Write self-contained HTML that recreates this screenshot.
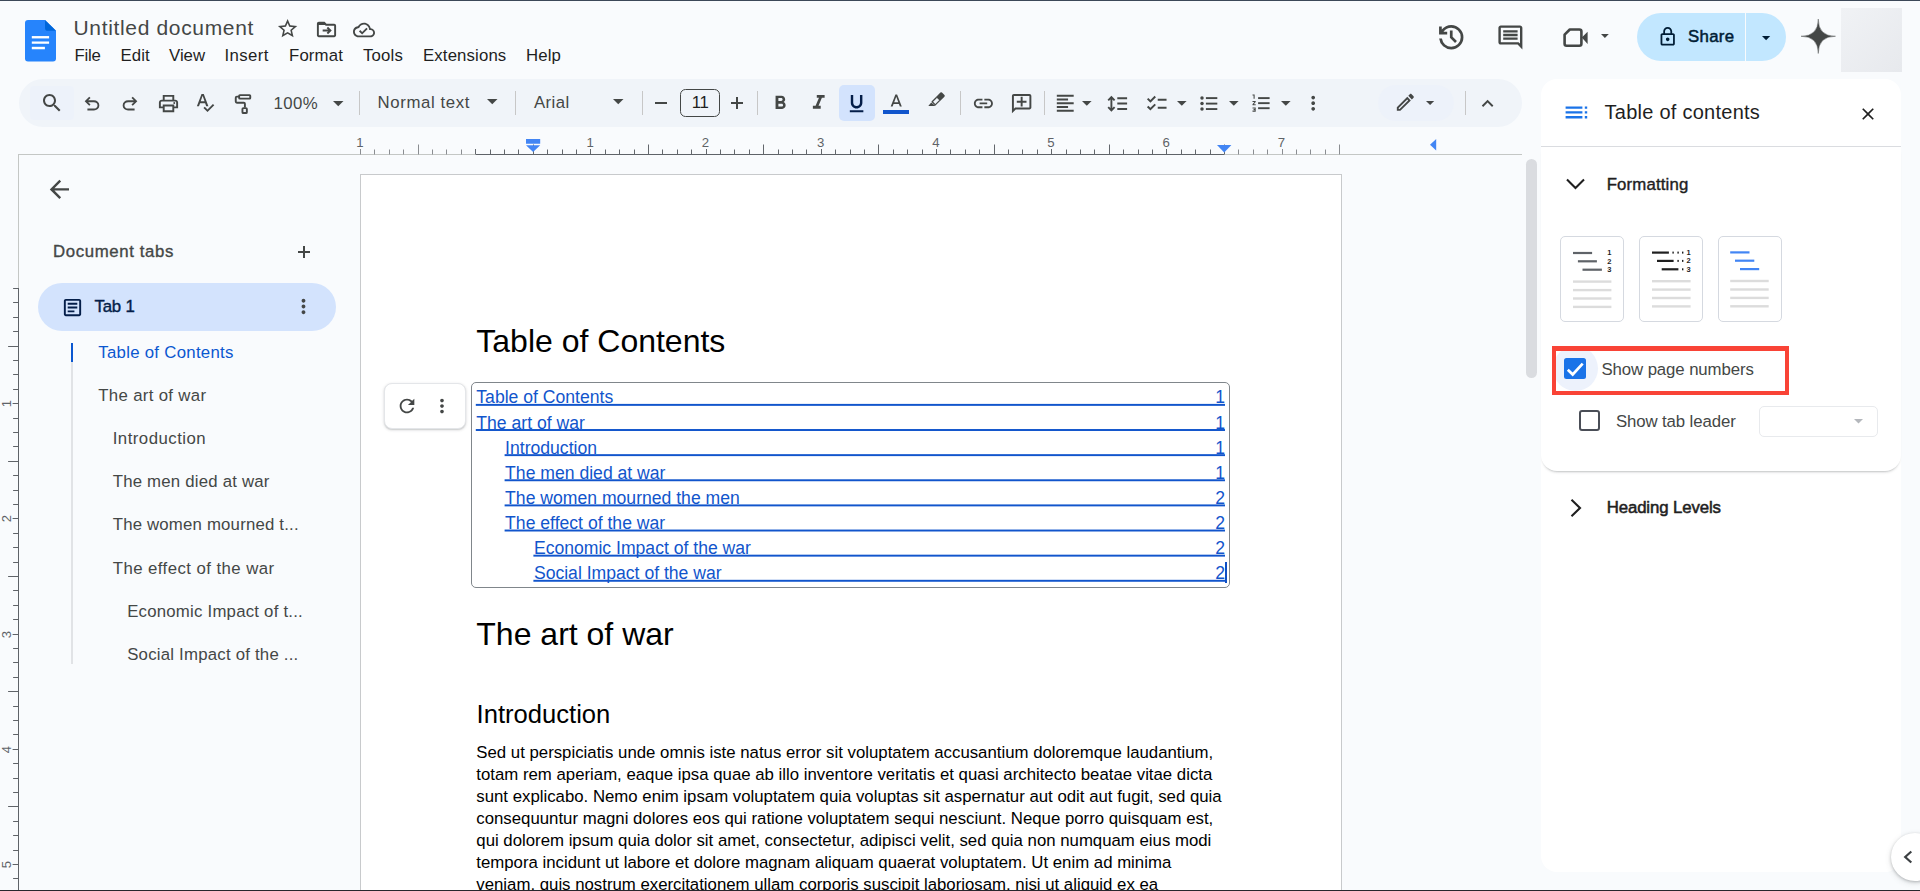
<!DOCTYPE html>
<html lang="en"><head><meta charset="utf-8"><title>Untitled document - Google Docs</title>
<style>
*{box-sizing:border-box;margin:0;padding:0}
html,body{width:1920px;height:891px;overflow:hidden;background:#f9fbfd;font-family:"Liberation Sans",Arial,sans-serif;color:#1f1f1f}
body{position:relative}
.abs{position:absolute}
svg{display:block;position:absolute;overflow:visible}
.ic{fill:#444746}
.t{position:absolute;white-space:nowrap;line-height:1}
.menu{font-size:16.8px;color:#1f1f1f;top:48px}
.tb{font-size:16.8px;color:#444746;top:96px}
.sep{position:absolute;top:91px;width:1px;height:24px;background:#c7c7c7}
.ol{font-size:16.8px;color:#444746}
.h1{font-size:32px;color:#000}
.h2{font-size:25.6px;color:#000}
.p{font-size:16.8px;color:#000}
.toc{font-size:17.6px;color:#1155cc}
.ul{position:absolute;height:2px;background:#1155cc}
</style></head><body>
<!--TOPBAR-->
<div class="abs" style="left:0;top:0;width:1920px;height:1px;background:#3c4858"></div>
<!-- docs logo -->
<svg style="left:25px;top:20px" width="31" height="41.400" viewBox="0 0 31 42" preserveAspectRatio="none"><path d="M3 0h17l11 11v28a3 3 0 0 1-3 3H3a3 3 0 0 1-3-3V3a3 3 0 0 1 3-3z" fill="#2684fc"/><path d="M20 0l11 11H23a3 3 0 0 1-3-3z" fill="#0066da"/><rect x="6.800" y="16.300" width="17.300" height="2.400" fill="#fff"/><rect x="6.800" y="21.800" width="17.300" height="2.300" fill="#fff"/><rect x="6.800" y="27.200" width="13.100" height="2.500" fill="#fff"/></svg>
<div class="t" style="left:73.5px;top:17px;font-size:21px;color:#444746;letter-spacing:.66px">Untitled document</div>
<svg class="ic" style="left:275.700px;top:16.600px" width="23.200" height="23.200" viewBox="0 0 24 24"><path d="M22 9.24l-7.19-.62L12 2 9.19 8.63 2 9.24l5.46 4.73L5.82 21 12 17.27 18.18 21l-1.63-7.03L22 9.24zM12 15.4l-3.76 2.27 1-4.28-3.32-2.88 4.38-.38L12 6.1l1.71 4.04 4.38.38-3.32 2.88 1 4.28L12 15.4z"/></svg>
<svg class="ic" style="left:314.600px;top:17.700px" width="23" height="23" viewBox="0 0 24 24"><path d="M3 5h7.300l2 2.300H3z"/><path d="M20 6h-8l-2-2H4c-1.1 0-2 .9-2 2v12c0 1.1.9 2 2 2h16c1.1 0 2-.9 2-2V8c0-1.1-.9-2-2-2zm0 12H4V6h5.17l2 2H20v10zm-7.84-2.59L13.58 16.83l3.92-3.83-3.92-3.83-1.42 1.41L13.6 12H8v2h5.6z"/></svg>
<svg class="ic" style="left:353px;top:18.5px" width="22" height="22" viewBox="0 0 24 24"><path d="M19.35 10.04C18.67 6.59 15.64 4 12 4 9.11 4 6.6 5.64 5.35 8.04 2.34 8.36 0 10.91 0 14c0 3.31 2.69 6 6 6h13c2.76 0 5-2.24 5-5 0-2.64-2.05-4.78-4.65-4.96zM19 18H6c-2.21 0-4-1.79-4-4 0-2.05 1.53-3.76 3.56-3.97l1.07-.11.5-.95C8.08 7.14 9.94 6 12 6c2.62 0 4.88 1.86 5.39 4.43l.3 1.5 1.53.11c1.56.1 2.78 1.41 2.78 2.96 0 1.65-1.35 3-3 3zm-9-3.82l-2.09-2.09L6.5 13.5 10 17l6.01-6.01-1.41-1.41z"/></svg>
<div class="t menu" style="left:74.5px;letter-spacing:-.2px">File</div>
<div class="t menu" style="left:120.5px;letter-spacing:.1px">Edit</div>
<div class="t menu" style="left:169px">View</div>
<div class="t menu" style="left:224.5px;letter-spacing:.39px">Insert</div>
<div class="t menu" style="left:289px;letter-spacing:.14px">Format</div>
<div class="t menu" style="left:363px;letter-spacing:.16px">Tools</div>
<div class="t menu" style="left:423px;letter-spacing:.13px">Extensions</div>
<div class="t menu" style="left:526px;letter-spacing:.12px">Help</div>
<!-- right header -->
<svg class="ic" style="left:1434.750px;top:20.750px" width="32.500" height="32.500" viewBox="0 -960 960 960"><path d="M480-120q-138 0-240.500-91.500T122-440h82q14 104 92.500 172T480-200q117 0 198.500-81.500T760-480q0-117-81.500-198.500T480-760q-69 0-129 32t-101 88h110v80H120v-240h80v94q51-64 124.500-99T480-840q75 0 140.500 28.500t114 77q48.500 48.500 77 114T840-480q0 75-28.500 140.500t-77 114q-48.500 48.500-114 77T480-120Zm112-192L440-464v-216h80v184l128 128-56 56Z"/></svg>
<svg class="ic" style="left:1495.850px;top:23.300px" width="28.800" height="28.800" viewBox="0 0 24 24"><path d="M21.99 4c0-1.1-.89-2-1.99-2H4c-1.1 0-2 .9-2 2v12c0 1.1.9 2 2 2h14l4 4-.01-18zM20 4v13.17L18.83 16H4V4h16zM6 12h12v2H6zm0-3h12v2H6zm0-3h12v2H6z"/></svg>
<svg style="left:1561px;top:24px" width="30" height="28" viewBox="0 0 30 28"><path d="M8.800 5.500H18.400a2 2 0 0 1 2 2V19.800a2 2 0 0 1-2 2H5.600a2 2 0 0 1-2-2V10.700z" fill="none" stroke="#444746" stroke-width="2.600" stroke-linejoin="round"/><path d="M20.800 13.400l5.800-5.600v12.200z" fill="#444746"/></svg>
<svg class="ic" style="left:1601.100px;top:33.900px" width="7.800" height="4" viewBox="0 0 10 5"><path d="M0 0h10L5 5z"/></svg>
<div class="abs" style="left:1637px;top:13px;width:149px;height:48px;border-radius:24px;background:#c2e7ff"></div>
<div class="abs" style="left:1745px;top:13px;width:1.3px;height:48px;background:#f9fbfd"></div>
<svg style="left:1656.750px;top:26px" width="21.400" height="21.400" viewBox="0 0 24 24" fill="#001d35"><path d="M18 8h-1V6c0-2.76-2.24-5-5-5S7 3.240 7 6v2H6c-1.1 0-2 .9-2 2v10c0 1.1.9 2 2 2h12c1.100 0 2-.9 2-2V10c0-1.1-.9-2-2-2zM9 6c0-1.66 1.34-3 3-3s3 1.34 3 3v2H9V6zm9 14H6V10h12v10zm-6-3c1.1 0 2-.9 2-2s-.9-2-2-2-2 .9-2 2 .9 2 2 2z"/></svg>
<div class="t" style="left:1688px;top:29px;font-size:16.800px;color:#001d35;letter-spacing:.3px;-webkit-text-stroke:.5px #001d35">Share</div>
<svg style="left:1762.200px;top:35.900px" width="8.200" height="4.300" viewBox="0 0 10 5" fill="#001d35"><path d="M0 0h10L5 5z"/></svg>
<svg style="left:1801.200px;top:19.150px" width="34.500" height="34.500" viewBox="0 0 24 24" fill="#444746" stroke="#444746" stroke-width=".3" stroke-linejoin="miter" stroke-miterlimit="20"><path d="M12 0Q12 12 24 12Q12 12 12 24Q12 12 0 12Q12 12 12 0z"/></svg>
<div class="abs" style="left:1841px;top:8px;width:61px;height:64px;background:linear-gradient(135deg,#f0f2f5,#e7e9ed)"></div>
<!--TOOLBAR-->
<div class="abs" style="left:19px;top:79px;width:1503px;height:48px;border-radius:24px;background:#f0f4f9"></div>
<div class="abs" style="left:30px;top:86px;width:44px;height:34px;border-radius:4px;background:#edf2fa"></div>
<div class="abs" style="left:1378px;top:85px;width:76px;height:36px;border-radius:18px;background:#edf2fa"></div>
<svg style="left:39.7px;top:91.2px" width="24" height="24" viewBox="0 0 24 24" fill="#444746" ><path d="M15.5 14h-.79l-.28-.27C15.41 12.59 16 11.11 16 9.5 16 5.91 13.09 3 9.5 3S3 5.91 3 9.5 5.91 16 9.5 16c1.61 0 3.09-.59 4.23-1.57l.27.28v.79l5 4.99L20.49 19l-4.99-5zm-6 0C7.01 14 5 11.99 5 9.5S7.01 5 9.5 5 14 7.01 14 9.5 11.99 14 9.500 14z"/></svg>
<svg style="left:81.3px;top:93.3px" width="22" height="22" viewBox="0 -960 960 960" fill="#444746" ><path d="M280-200v-80h284q63 0 109.500-40T720-420q0-60-46.500-100T564-560H312l104 104-56 56-200-200 200-200 56 56-104 104h252q97 0 166.500 63T800-420q0 94-69.500 157T564-200H280Z"/></svg>
<svg style="left:118.5px;top:93.3px" width="22" height="22" viewBox="0 -960 960 960" fill="#444746" ><path d="M396-200q-97 0-166.500-63T160-420q0-94 69.500-157T396-640h252L544-744l56-56 200 200-200 200-56-56 104-104H396q-63 0-109.500 40T240-420q0 60 46.500 100T396-280h284v80H396Z"/></svg>
<svg style="left:157.1px;top:92.1px" width="23" height="23" viewBox="0 -960 960 960" fill="#444746" ><path d="M640-640v-120H320v120h-80v-200h480v200h-80Zm80 180q17 0 28.500-11.500T760-500q0-17-11.500-28.500T720-540q-17 0-28.500 11.500T680-500q0 17 11.500 28.500T720-460Zm-80 260v-160H320v160h320Zm80 80H240v-160H80v-240q0-51 35-85.500t85-34.500h560q51 0 85.500 34.500T880-520v240H720v160Zm80-240v-160q0-17-11.500-28.500T760-560H200q-17 0-28.500 11.500T160-520v160h80v-80h480v80h80Z"/></svg>
<svg style="left:194.1px;top:90.6px" width="23" height="23" viewBox="0 -960 960 960" fill="#444746" ><path d="M564-80 394-250l56-56 114 114 226-226 56 56L564-80ZM120-320l194-520h94l194 520h-92l-46-132H254l-46 132h-88Zm160-208h160l-78-222h-4l-78 222Z"/></svg>
<svg style="left:231.0px;top:92.0px" width="24" height="24" viewBox="0 0 24 24" fill="#444746" ><g fill="none" stroke="#444746" stroke-width="1.900" stroke-linejoin="round"><rect x="8.150" y="3.150" width="11.100" height="3.500" rx=".7"/><path d="M8.150 4.600H5.900Q4.750 4.600 4.750 5.700V9.600Q4.750 10.700 5.900 10.700H12.800Q13.900 10.700 13.900 11.800V15.400"/><rect x="11.450" y="16.150" width="4.400" height="4.900" rx=".9"/></g></svg>
<div class="t tb" style="left:273.500px;letter-spacing:.4px">100%</div>
<svg style="left:333.4px;top:101.2px" width="10.5" height="5.25" viewBox="0 0 10 5" fill="#444746"><path d="M0 0h10L5 5z"/></svg>
<div class="sep" style="left:359px"></div>
<div class="t tb" style="left:377.500px;top:95px;letter-spacing:.62px">Normal text</div>
<svg style="left:487.4px;top:99.4px" width="10.5" height="5.25" viewBox="0 0 10 5" fill="#444746"><path d="M0 0h10L5 5z"/></svg>
<div class="sep" style="left:515px"></div>
<div class="t tb" style="left:534px;top:95px;letter-spacing:.4px">Arial</div>
<svg style="left:613.4px;top:99.4px" width="10.5" height="5.25" viewBox="0 0 10 5" fill="#444746"><path d="M0 0h10L5 5z"/></svg>
<div class="sep" style="left:642px"></div>
<div class="abs" style="left:654.800px;top:102px;width:12px;height:2px;background:#444746"></div>
<div class="abs" style="left:680px;top:88.800px;width:40px;height:28.200px;border:1.200px solid #444746;border-radius:5.500px"></div>
<div class="t tb" style="left:691.800px;top:95px;letter-spacing:-.5px;color:#1f1f1f">11</div>
<div class="abs" style="left:731.300px;top:102px;width:12px;height:2px;background:#444746"></div><div class="abs" style="left:736.300px;top:97px;width:2px;height:12px;background:#444746"></div>
<div class="sep" style="left:757px"></div>
<svg style="left:769.4px;top:92.0px" width="22.5" height="22.5" viewBox="0 0 24 24" fill="#444746" ><path d="M15.600 10.790c.97-.67 1.650-1.770 1.650-2.790 0-2.260-1.750-4-4-4H7v14h7.040c2.090 0 3.710-1.700 3.710-3.790 0-1.520-.86-2.820-2.150-3.420zM10 6.500h3c.83 0 1.500.67 1.500 1.500s-.67 1.500-1.500 1.500h-3v-3zm3.500 9H10v-3h3.500c.83 0 1.500.67 1.500 1.500s-.67 1.500-1.500 1.500z"/></svg>
<svg style="left:807.4px;top:91.3px" width="23.5" height="23.5" viewBox="0 0 24 24" fill="#444746" ><path d="M10 4v3h2.210l-3.420 8H6v3h8v-3h-2.210l3.420-8H18V4z"/></svg>
<div class="abs" style="left:839px;top:85px;width:36px;height:36px;border-radius:5px;background:#d3e3fd"></div>
<svg style="left:845.4px;top:91.9px" width="23.2" height="23.2" viewBox="0 0 24 24" fill="#041e49" ><path d="M12 17c3.310 0 6-2.690 6-6V3h-2.500v8c0 1.930-1.570 3.500-3.500 3.500S8.500 12.930 8.500 11V3H6v8c0 3.310 2.690 6 6 6zm-7 2v2h14v-2H5z"/></svg>
<svg style="left:885.6px;top:92.1px" width="20.5" height="20.5" viewBox="0 0 24 24" fill="#444746" ><path d="M11 3L5.500 17h2.250l1.120-3h6.250l1.120 3h2.250L13 3h-2zm-1.380 9L12 5.670 14.380 12H9.620z"/></svg>
<div class="abs" style="left:883px;top:110px;width:26px;height:4px;background:#1155cc"></div>
<svg style="left:0;top:0" width="1920" height="130"><g transform="translate(938.250 98.800) rotate(45)"><path d="M-2.850 0.300V-5.900a1.100 1.100 0 0 1 1.100-1.100H1.750a1.100 1.100 0 0 1 1.100 1.100V0.300z" fill="#444746"/><path d="M-2.200 0V6.400H2.200V0" fill="none" stroke="#444746" stroke-width="1.300" stroke-linejoin="round"/></g><path d="M931.200 102.600L928.300 105.950H935.600z" fill="#444746"/></svg>
<div class="sep" style="left:960px"></div>
<svg style="left:971.9px;top:92.3px" width="22.8" height="22.8" viewBox="0 0 24 24" fill="#444746" ><path d="M3.900 12c0-1.710 1.390-3.100 3.100-3.100h4V7H7c-2.760 0-5 2.240-5 5s2.240 5 5 5h4v-1.900H7c-1.710 0-3.100-1.390-3.100-3.100zM8 13h8v-2H8v2zm9-6h-4v1.900h4c1.710 0 3.100 1.390 3.100 3.100s-1.390 3.100-3.100 3.100h-4V17h4c2.760 0 5-2.240 5-5s-2.240-5-5-5z"/></svg>
<svg style="left:1010.1px;top:91.5px" width="23.3" height="23.3" viewBox="0 0 24 24" fill="#444746" ><g transform="translate(24 0) scale(-1 1)"><path d="M22 4c0-1.100-.9-2-2-2H4c-1.100 0-2 .9-2 2v12c0 1.100.9 2 2 2h14l4 4V4zm-2 13.170L18.830 16H4V4h16v13.170zM13 5h-2v4H7v2h4v4h2v-4h4V9h-4z"/></g></svg>
<div class="sep" style="left:1044px"></div>
<svg style="left:1054.3px;top:92.2px" width="22.5" height="22.5" viewBox="0 0 24 24" fill="#444746" ><path d="M15 15H3v2h12v-2zm0-8H3v2h12V7zM3 13h18v-2H3v2zm0 8h18v-2H3v2zM3 3v2h18V3H3z"/></svg>
<svg style="left:1081.8px;top:101.1px" width="9.6" height="4.8" viewBox="0 0 10 5" fill="#444746"><path d="M0 0h10L5 5z"/></svg>
<svg style="left:1107px;top:95px" width="22" height="18" viewBox="0 0 22 18" fill="none" stroke="#444746"><path d="M10.300 3.300H20.100M10.300 8.600H20.100M10.300 13.900H20.100" stroke-width="2"/><path d="M4.400 2.500V15M1.200 5.400L4.400 2.200L7.600 5.400M1.200 12.100L4.400 15.300L7.600 12.100" stroke-width="1.900"/></svg>
<svg style="left:1145.2px;top:91.7px" width="23.5" height="23.5" viewBox="0 0 24 24" fill="#444746" ><path d="M22 7h-9v2h9V7zm0 8h-9v2h9v-2zM5.540 11L2 7.460l1.410-1.410 2.120 2.120 4.240-4.240 1.410 1.410L5.540 11zm0 8L2 15.460l1.410-1.410 2.120 2.120 4.240-4.240 1.410 1.410L5.540 19z"/></svg>
<svg style="left:1176.7px;top:101.1px" width="9.6" height="4.8" viewBox="0 0 10 5" fill="#444746"><path d="M0 0h10L5 5z"/></svg>
<svg class="ic" style="left:0;top:0" width="1920" height="130"><circle cx="1202" cy="98.100" r="1.750"/><circle cx="1202" cy="103.600" r="1.750"/><circle cx="1202" cy="109.050" r="1.750"/><rect x="1205.900" y="97.150" width="11.400" height="1.900"/><rect x="1205.900" y="102.650" width="11.400" height="1.900"/><rect x="1205.900" y="108.100" width="11.400" height="1.900"/></svg>
<svg style="left:1228.6px;top:101.1px" width="9.6" height="4.8" viewBox="0 0 10 5" fill="#444746"><path d="M0 0h10L5 5z"/></svg>
<svg class="ic" style="left:0;top:0" width="1920" height="130"><g transform="translate(1250.360 90.260) scale(1.070)"><path d="M2 17h2v.5H3v1h1v.5H2v1h3v-4H2v1zm1-9h1V4H2v1h1v3zm-1 3h1.800L2 13.100v.9h3v-1H3.200L5 10.900V10H2v1z"/></g><rect x="1258.100" y="97.150" width="11.500" height="1.900"/><rect x="1258.100" y="102.200" width="11.500" height="1.900"/><rect x="1258.100" y="107.250" width="11.500" height="1.900"/></svg>
<svg style="left:1280.7px;top:101.1px" width="9.6" height="4.8" viewBox="0 0 10 5" fill="#444746"><path d="M0 0h10L5 5z"/></svg>
<svg style="left:1301.9px;top:92.2px" width="22.4" height="22.4" viewBox="0 0 24 24" fill="#444746" ><path d="M12 8c1.100 0 2-.9 2-2s-.9-2-2-2-2 .9-2 2 .9 2 2 2zm0 2c-1.100 0-2 .9-2 2s.9 2 2 2 2-.9 2-2-.9-2-2-2zm0 6c-1.100 0-2 .9-2 2s.9 2 2 2 2-.9 2-2-.9-2-2-2z"/></svg>
<svg style="left:1394.0px;top:91.1px" width="22.7" height="22.7" viewBox="0 0 24 24" fill="#444746" ><path d="M14.060 9.020l.92.92L5.920 19H5v-.92l9.060-9.060M17.660 3c-.25 0-.51.1-.7.290l-1.830 1.830 3.750 3.750 1.830-1.830c.39-.39.39-1.020 0-1.410l-2.340-2.340c-.2-.2-.45-.29-.71-.29zm-3.600 3.190L3 17.250V21h3.750L17.810 9.940l-3.750-3.750z"/></svg>
<svg style="left:1425.9px;top:100.9px" width="8.2" height="4.1" viewBox="0 0 10 5" fill="#444746"><path d="M0 0h10L5 5z"/></svg>
<div class="sep" style="left:1465px"></div>
<svg style="left:1476.2px;top:92.2px" width="23.2" height="23.2" viewBox="0 0 24 24" fill="#444746" ><path d="M12 8l-6 6 1.410 1.410L12 10.830l4.590 4.580L18 14z"/></svg>
<!--RULERS-->
<div class="abs" style="left:18px;top:154px;width:1504px;height:1px;background:#c4c7c5"></div>
<div class="abs" style="left:475.600px;top:154px;width:748.800px;height:1px;background:#5f6368"></div>
<svg style="left:0;top:0" width="1920" height="160"><path d="M360.5 149V154.500M374.5 149.5V154.500M389.5 149.5V154.500M403.5 149.5V154.500M418.5 144.5V154.500M432.5 149.5V154.500M446.5 149.5V154.500M461.5 149.5V154.500M1238.5 149.5V154.500M1253.5 149.5V154.500M1267.5 149.5V154.500M1282.5 149V154.500M1296.5 149.5V154.500M1310.5 149.5V154.500M1325.5 149.5V154.500M1339.5 144.5V154.500" stroke="#8a8d91" stroke-width="1" fill="none"/><path d="M475.5 149V154.500M490.5 149.5V154.500M504.5 149.5V154.500M518.5 149.5V154.500M533.5 144.5V154.500M547.5 149.5V154.500M562.5 149.5V154.500M576.5 149.5V154.500M590.5 149V154.500M605.5 149.5V154.500M619.5 149.5V154.500M634.5 149.5V154.500M648.5 144.5V154.500M662.5 149.5V154.500M677.5 149.5V154.500M691.5 149.5V154.500M706.5 149V154.500M720.5 149.5V154.500M734.5 149.5V154.500M749.5 149.5V154.500M763.5 144.5V154.500M778.5 149.5V154.500M792.5 149.5V154.500M806.5 149.5V154.500M821.5 149V154.500M835.5 149.5V154.500M850.5 149.5V154.500M864.5 149.5V154.500M878.5 144.5V154.500M893.5 149.5V154.500M907.5 149.5V154.500M922.5 149.5V154.500M936.5 149V154.500M950.5 149.5V154.500M965.5 149.5V154.500M979.5 149.5V154.500M994.5 144.5V154.500M1008.5 149.5V154.500M1022.5 149.5V154.500M1037.5 149.5V154.500M1051.5 149V154.500M1066.5 149.5V154.500M1080.5 149.5V154.500M1094.5 149.5V154.500M1109.5 144.5V154.500M1123.5 149.5V154.500M1138.5 149.5V154.500M1152.5 149.5V154.500M1166.5 149V154.500M1181.5 149.5V154.500M1195.5 149.5V154.500M1210.5 149.5V154.500M1224.5 144.5V154.500" stroke="#63676c" stroke-width="1" fill="none"/></svg>
<div class="t" style="left:349.8px;top:136px;width:20px;text-align:center;font-size:13.200px;color:#5f6368">1</div>
<div class="t" style="left:580.2px;top:136px;width:20px;text-align:center;font-size:13.200px;color:#5f6368">1</div>
<div class="t" style="left:695.4px;top:136px;width:20px;text-align:center;font-size:13.200px;color:#5f6368">2</div>
<div class="t" style="left:810.6px;top:136px;width:20px;text-align:center;font-size:13.200px;color:#5f6368">3</div>
<div class="t" style="left:925.8px;top:136px;width:20px;text-align:center;font-size:13.200px;color:#5f6368">4</div>
<div class="t" style="left:1041.0px;top:136px;width:20px;text-align:center;font-size:13.200px;color:#5f6368">5</div>
<div class="t" style="left:1156.2px;top:136px;width:20px;text-align:center;font-size:13.200px;color:#5f6368">6</div>
<div class="t" style="left:1271.4px;top:136px;width:20px;text-align:center;font-size:13.200px;color:#5f6368">7</div>
<svg style="left:526px;top:139px" width="14.400" height="14" viewBox="0 0 14.400 14" fill="#4285f4"><rect x="0" y="0" width="14.200" height="4.750"/><path d="M0 6.200h14.200L7.100 13z"/></svg>
<svg style="left:1217px;top:145px" width="14.400" height="8" viewBox="0 0 14.400 8" fill="#4285f4"><path d="M0 0h14.400L7.200 7.500z"/></svg>
<svg style="left:1429.900px;top:139.300px" width="6.200" height="11.400" viewBox="0 0 6.200 11.400" fill="#4285f4"><path d="M6.200 0v11.400L0 5.700z"/></svg>
<div class="abs" style="left:18px;top:154px;width:1px;height:737px;background:#c4c7c5"></div>
<div class="abs" style="left:18px;top:288px;width:1.200px;height:603px;background:#5f6368"></div>
<svg style="left:0;top:0" width="20" height="891"><path d="M13.1 288.5H18.500M13.1 302.5H18.500M13.1 317.5H18.500M13.1 331.5H18.500M8.1 346.5H18.500M13.1 360.5H18.500M13.1 374.5H18.500M13.1 389.5H18.500M12.6 403.5H18.500M13.1 418.5H18.500M13.1 432.5H18.500M13.1 446.5H18.500M8.1 461.5H18.500M13.1 475.5H18.500M13.1 490.5H18.500M13.1 504.5H18.500M12.6 518.5H18.500M13.1 533.5H18.500M13.1 547.5H18.500M13.1 562.5H18.500M8.1 576.5H18.500M13.1 590.5H18.500M13.1 605.5H18.500M13.1 619.5H18.500M12.6 634.5H18.500M13.1 648.5H18.500M13.1 662.5H18.500M13.1 677.5H18.500M8.1 691.5H18.500M13.1 706.5H18.500M13.1 720.5H18.500M13.1 734.5H18.500M12.6 749.5H18.500M13.1 763.5H18.500M13.1 778.5H18.500M13.1 792.5H18.500M8.1 806.5H18.500M13.1 821.5H18.500M13.1 835.5H18.500M13.1 850.5H18.500M12.6 864.5H18.500M13.1 878.5H18.500" stroke="#5f6368" stroke-width="1" fill="none"/></svg>
<div class="t" style="left:-3.700px;top:397.2px;width:20px;height:13px;text-align:center;font-size:13px;color:#5f6368;transform:rotate(-90deg)">1</div>
<div class="t" style="left:-3.700px;top:512.4px;width:20px;height:13px;text-align:center;font-size:13px;color:#5f6368;transform:rotate(-90deg)">2</div>
<div class="t" style="left:-3.700px;top:627.6px;width:20px;height:13px;text-align:center;font-size:13px;color:#5f6368;transform:rotate(-90deg)">3</div>
<div class="t" style="left:-3.700px;top:742.8px;width:20px;height:13px;text-align:center;font-size:13px;color:#5f6368;transform:rotate(-90deg)">4</div>
<div class="t" style="left:-3.700px;top:858.0px;width:20px;height:13px;text-align:center;font-size:13px;color:#5f6368;transform:rotate(-90deg)">5</div>
<!--SIDEBAR-->
<svg class="ic" style="left:44.500px;top:174.700px" width="28.800" height="28.800" viewBox="0 0 24 24"><path d="M20 11H7.830l5.590-5.590L12 4l-8 8 8 8 1.410-1.410L7.830 13H20v-2z"/></svg>
<div class="t " style="left:53.0px;top:244px;font-size:16.8px;color:#444746;letter-spacing:.62px;-webkit-text-stroke:.35px #444746">Document tabs</div>
<div class="abs" style="left:297.500px;top:251.200px;width:12.500px;height:1.900px;background:#444746"></div><div class="abs" style="left:302.800px;top:245.900px;width:1.900px;height:12.500px;background:#444746"></div>
<div class="abs" style="left:38px;top:283px;width:298px;height:48px;border-radius:24px;background:#d3e3fd"></div>
<svg style="left:60.800px;top:295.500px" width="23" height="23" viewBox="0 0 24 24" fill="#041e49"><path d="M19 5v14H5V5h14m0-2H5c-1.100 0-2 .9-2 2v14c0 1.100.9 2 2 2h14c1.100 0 2-.9 2-2V5c0-1.100-.9-2-2-2zm-5 14H7v-2h7v2zm3-4H7v-2h10v2zm0-4H7V7h10v2z"/></svg>
<div class="t " style="left:94.5px;top:299px;font-size:16.8px;color:#041e49;letter-spacing:-.2px;-webkit-text-stroke:.4px #041e49">Tab 1</div>
<svg class="ic" style="left:292.400px;top:295.300px" width="23" height="23" viewBox="0 0 24 24"><path d="M12 8c1.100 0 2-.9 2-2s-.9-2-2-2-2 .9-2 2 .9 2 2 2zm0 2c-1.100 0-2 .9-2 2s.9 2 2 2 2-.9 2-2-.9-2-2-2zm0 6c-1.100 0-2 .9-2 2s.9 2 2 2 2-.9 2-2-.9-2-2-2z"/></svg>
<div class="abs" style="left:71px;top:343px;width:2px;height:321px;background:#e1e3e6"></div>
<div class="abs" style="left:71px;top:343px;width:2px;height:19px;background:#0b57d0"></div>
<div class="t " style="left:98.3px;top:345px;font-size:16.8px;letter-spacing:0.28px;color:#0b57d0">Table of Contents</div>
<div class="t " style="left:98.3px;top:388px;font-size:16.8px;letter-spacing:0.32px;color:#444746">The art of war</div>
<div class="t " style="left:112.7px;top:431px;font-size:16.8px;letter-spacing:0.48px;color:#444746">Introduction</div>
<div class="t " style="left:112.7px;top:474px;font-size:16.8px;letter-spacing:0.21px;color:#444746">The men died at war</div>
<div class="t " style="left:112.7px;top:517px;font-size:16.8px;letter-spacing:0.19px;color:#444746">The women mourned t...</div>
<div class="t " style="left:112.7px;top:561px;font-size:16.8px;letter-spacing:0.44px;color:#444746">The effect of the war</div>
<div class="t " style="left:127.2px;top:604px;font-size:16.8px;letter-spacing:0.22px;color:#444746">Economic Impact of t...</div>
<div class="t " style="left:127.2px;top:647px;font-size:16.8px;letter-spacing:0.22px;color:#444746">Social Impact of the ...</div>
<!--PAGE-->
<div class="abs" style="left:360px;top:174px;width:982px;height:730px;background:#fff;border:1px solid #c8cacc"></div>
<div class="t h1" style="left:476.3px;top:325.00px;">Table of Contents</div>
<div class="abs" style="left:383.500px;top:383px;width:82px;height:46px;border-radius:8px;background:#fff;border:1px solid #e4e6e9;box-shadow:0 1px 3px rgba(60,64,67,.22),0 1px 1px rgba(60,64,67,.10)"></div>
<svg class="ic" style="left:396px;top:395.300px" width="22" height="22" viewBox="0 0 24 24"><path d="M17.650 6.350C16.200 4.900 14.210 4 12 4c-4.420 0-7.990 3.580-7.990 8s3.570 8 7.990 8c3.730 0 6.840-2.550 7.730-6h-2.080c-.82 2.330-3.040 4-5.650 4-3.310 0-6-2.690-6-6s2.690-6 6-6c1.660 0 3.140.69 4.220 1.780L13 11h7V4l-2.350 2.350z"/></svg>
<svg class="ic" style="left:431.300px;top:395px" width="22" height="22" viewBox="0 0 24 24"><path d="M12 8c1.100 0 2-.9 2-2s-.9-2-2-2-2 .9-2 2 .9 2 2 2zm0 2c-1.100 0-2 .9-2 2s.9 2 2 2 2-.9 2-2-.9-2-2-2zm0 6c-1.100 0-2 .9-2 2s.9 2 2 2 2-.9 2-2-.9-2-2-2z"/></svg>
<div class="abs" style="left:471px;top:381.600px;width:759.200px;height:206px;border:1.200px solid #80868b;border-radius:5px"></div>
<div class="t toc" style="left:476.3px;top:389.00px;">Table of Contents</div>
<div class="t toc" style="left:1195px;width:30px;text-align:right;top:389.0px">1</div>
<div class="t toc" style="left:476.3px;top:415.00px;">The art of war</div>
<div class="t toc" style="left:1195px;width:30px;text-align:right;top:415.0px">1</div>
<div class="t toc" style="left:505.1px;top:440.00px;">Introduction</div>
<div class="t toc" style="left:1195px;width:30px;text-align:right;top:440.0px">1</div>
<div class="t toc" style="left:505.1px;top:465.00px;">The men died at war</div>
<div class="t toc" style="left:1195px;width:30px;text-align:right;top:465.0px">1</div>
<div class="t toc" style="left:505.1px;top:490.00px;">The women mourned the men</div>
<div class="t toc" style="left:1195px;width:30px;text-align:right;top:490.0px">2</div>
<div class="t toc" style="left:505.1px;top:515.00px;">The effect of the war</div>
<div class="t toc" style="left:1195px;width:30px;text-align:right;top:515.0px">2</div>
<div class="t toc" style="left:533.9px;top:540.00px;">Economic Impact of the war</div>
<div class="t toc" style="left:1195px;width:30px;text-align:right;top:540.0px">2</div>
<div class="t toc" style="left:533.9px;top:565.00px;">Social Impact of the war</div>
<div class="t toc" style="left:1195px;width:30px;text-align:right;top:565.0px">2</div>
<svg style="left:0;top:0" width="1920" height="891" fill="#1155cc"><rect x="475.8" y="403.90" width="749.2" height="1.950"/><rect x="475.8" y="429.03" width="749.2" height="1.950"/><rect x="504.6" y="454.16" width="720.4" height="1.950"/><rect x="504.6" y="479.29" width="720.4" height="1.950"/><rect x="504.6" y="504.42" width="720.4" height="1.950"/><rect x="504.6" y="529.55" width="720.4" height="1.950"/><rect x="533.4" y="554.68" width="691.6" height="1.950"/><rect x="533.4" y="579.81" width="691.6" height="1.950"/></svg>
<div class="abs" style="left:1225.400px;top:561.700px;width:1.700px;height:21px;background:#0f4fc4"></div>
<div class="t h1" style="left:476.3px;top:618.00px;">The art of war</div>
<div class="t h2" style="left:476.6px;top:702.00px;">Introduction</div>
<div class="p abs" style="left:476.300px;top:741.900px;white-space:nowrap;line-height:22.100px">Sed ut perspiciatis unde omnis iste natus error sit voluptatem accusantium doloremque laudantium,<br>totam rem aperiam, eaque ipsa quae ab illo inventore veritatis et quasi architecto beatae vitae dicta<br>sunt explicabo. Nemo enim ipsam voluptatem quia voluptas sit aspernatur aut odit aut fugit, sed quia<br>consequuntur magni dolores eos qui ratione voluptatem sequi nesciunt. Neque porro quisquam est,<br>qui dolorem ipsum quia dolor sit amet, consectetur, adipisci velit, sed quia non numquam eius modi<br>tempora incidunt ut labore et dolore magnam aliquam quaerat voluptatem. Ut enim ad minima<br>veniam, quis nostrum exercitationem ullam corporis suscipit laboriosam, nisi ut aliquid ex ea<br>commodi consequatur? Quis autem vel eum iure reprehenderit qui in ea voluptate velit esse quam</div>
<div class="abs" style="left:1526px;top:159px;width:11px;height:218.500px;border-radius:5.500px;background:#dadce0"></div>
<div class="abs" style="left:0;top:890px;width:1920px;height:1px;background:#26282c;z-index:50"></div>
<!--PANEL-->
<div class="abs" style="left:1541px;top:78.500px;width:360px;height:793px;border-radius:16px;background:#fff"></div>
<div class="abs" style="left:1541px;top:147px;width:360px;height:324px;border-radius:0 0 16px 16px;background:#fff;box-shadow:0 3px 3px -2px rgba(60,64,67,.22),0 2px 1.500px -1px rgba(60,64,67,.12)"></div>
<div class="abs" style="left:1541px;top:140px;width:360px;height:20px;background:#fff"></div>
<svg style="left:1561.700px;top:98.100px" width="28.800" height="28.800" viewBox="0 0 24 24" fill="#1a73e8"><path d="M3 9h14V7H3v2zm0 4h14v-2H3v2zm0 4h14v-2H3v2zm16 0h2v-2h-2v2zm0-10v2h2V7h-2zm0 6h2v-2h-2v2z"/></svg>
<div class="t " style="left:1604.6px;top:102px;font-size:20px;color:#1f1f1f;letter-spacing:.25px">Table of contents</div>
<svg style="left:1857.900px;top:103.800px" width="20" height="20" viewBox="0 0 24 24" fill="#1f1f1f"><path d="M19 6.410L17.590 5 12 10.590 6.410 5 5 6.410 10.590 12 5 17.590 6.410 19 12 13.410 17.590 19 19 17.590 13.410 12z"/></svg>
<div class="abs" style="left:1541px;top:146px;width:360px;height:1px;background:#dadce0"></div>
<svg style="left:1560px;top:170px" width="32" height="28" viewBox="0 0 32 28"><path d="M7 9.500L15.500 18L24 9.500" fill="none" stroke="#1f1f1f" stroke-width="2.100"/></svg>
<div class="t " style="left:1606.7px;top:177px;font-size:16.8px;color:#1f1f1f;letter-spacing:.16px;-webkit-text-stroke:.4px #1f1f1f">Formatting</div>
<div class="abs" style="left:1560.3px;top:236.200px;width:63.500px;height:85.600px;border:1px solid #d5d9e0;border-radius:5px;background:#fff"></div>
<div class="abs" style="left:1639.3px;top:236.200px;width:63.500px;height:85.600px;border:1px solid #d5d9e0;border-radius:5px;background:#fff"></div>
<div class="abs" style="left:1718.3px;top:236.200px;width:63.500px;height:85.600px;border:1px solid #d5d9e0;border-radius:5px;background:#fff"></div>
<svg style="left:0;top:0" width="1920" height="400"><rect x="1573.0" y="251.90" width="19.1" height="2.2" fill="#5f6368"/></svg>
<div class="t" style="left:1607.3px;top:249.4px;font-size:7.500px;font-weight:700;color:#1f1f1f">1</div>
<svg style="left:0;top:0" width="1920" height="400"><rect x="1577.9" y="260.20" width="19.0" height="2.2" fill="#5f6368"/></svg>
<div class="t" style="left:1607.3px;top:257.7px;font-size:7.500px;font-weight:700;color:#1f1f1f">2</div>
<svg style="left:0;top:0" width="1920" height="400"><rect x="1582.5" y="268.60" width="19.4" height="2.2" fill="#5f6368"/></svg>
<div class="t" style="left:1607.3px;top:266.1px;font-size:7.500px;font-weight:700;color:#1f1f1f">3</div>
<svg style="left:0;top:0" width="1920" height="400"><rect x="1573.0" y="280.40" width="38.4" height="2.4" fill="#dcdcdc"/></svg>
<svg style="left:0;top:0" width="1920" height="400"><rect x="1573.0" y="288.90" width="38.4" height="2.4" fill="#dcdcdc"/></svg>
<svg style="left:0;top:0" width="1920" height="400"><rect x="1573.0" y="297.30" width="38.4" height="2.4" fill="#dcdcdc"/></svg>
<svg style="left:0;top:0" width="1920" height="400"><rect x="1573.0" y="305.70" width="38.4" height="2.4" fill="#dcdcdc"/></svg>
<svg style="left:0;top:0" width="1920" height="400"><rect x="1652.0" y="251.50" width="16.9" height="2.2" fill="#1f1f1f"/></svg>
<div class="t" style="left:1686.5px;top:249.0px;font-size:7.500px;font-weight:700;color:#1f1f1f">1</div>
<svg style="left:0;top:0" width="1920" height="400"><rect x="1672.4" y="251.6" width="1.4" height="2" fill="#1f1f1f"/></svg>
<svg style="left:0;top:0" width="1920" height="400"><rect x="1677.4" y="251.6" width="1.4" height="2" fill="#1f1f1f"/></svg>
<svg style="left:0;top:0" width="1920" height="400"><rect x="1682.0" y="251.6" width="1.4" height="2" fill="#1f1f1f"/></svg>
<svg style="left:0;top:0" width="1920" height="400"><rect x="1657.0" y="259.80" width="16.6" height="2.2" fill="#1f1f1f"/></svg>
<div class="t" style="left:1686.5px;top:257.3px;font-size:7.500px;font-weight:700;color:#1f1f1f">2</div>
<svg style="left:0;top:0" width="1920" height="400"><rect x="1677.4" y="259.9" width="1.4" height="2" fill="#1f1f1f"/></svg>
<svg style="left:0;top:0" width="1920" height="400"><rect x="1682.0" y="259.9" width="1.4" height="2" fill="#1f1f1f"/></svg>
<svg style="left:0;top:0" width="1920" height="400"><rect x="1661.7" y="268.20" width="16.7" height="2.2" fill="#1f1f1f"/></svg>
<div class="t" style="left:1686.5px;top:265.7px;font-size:7.500px;font-weight:700;color:#1f1f1f">3</div>
<svg style="left:0;top:0" width="1920" height="400"><rect x="1682.0" y="268.3" width="1.4" height="2" fill="#1f1f1f"/></svg>
<svg style="left:0;top:0" width="1920" height="400"><rect x="1652.0" y="280.00" width="38.6" height="2.4" fill="#dcdcdc"/></svg>
<svg style="left:0;top:0" width="1920" height="400"><rect x="1652.0" y="288.40" width="38.6" height="2.4" fill="#dcdcdc"/></svg>
<svg style="left:0;top:0" width="1920" height="400"><rect x="1652.0" y="296.80" width="38.6" height="2.4" fill="#dcdcdc"/></svg>
<svg style="left:0;top:0" width="1920" height="400"><rect x="1652.0" y="305.20" width="38.6" height="2.4" fill="#dcdcdc"/></svg>
<svg style="left:0;top:0" width="1920" height="400"><rect x="1730.2" y="251.30" width="19.3" height="2.2" fill="#4285f4"/></svg>
<svg style="left:0;top:0" width="1920" height="400"><rect x="1735.0" y="259.60" width="19.3" height="2.2" fill="#4285f4"/></svg>
<svg style="left:0;top:0" width="1920" height="400"><rect x="1740.0" y="268.00" width="19.2" height="2.2" fill="#4285f4"/></svg>
<svg style="left:0;top:0" width="1920" height="400"><rect x="1730.2" y="279.80" width="38.5" height="2.4" fill="#dcdcdc"/></svg>
<svg style="left:0;top:0" width="1920" height="400"><rect x="1730.2" y="288.30" width="38.5" height="2.4" fill="#dcdcdc"/></svg>
<svg style="left:0;top:0" width="1920" height="400"><rect x="1730.2" y="296.70" width="38.5" height="2.4" fill="#dcdcdc"/></svg>
<svg style="left:0;top:0" width="1920" height="400"><rect x="1730.2" y="305.10" width="38.5" height="2.4" fill="#dcdcdc"/></svg>
<div class="abs" style="left:1552.500px;top:346px;width:45px;height:45px;border-radius:50%;background:#edf2fc"></div>
<div class="abs" style="left:1564.200px;top:357.800px;width:21.600px;height:21.400px;border-radius:2.500px;background:#1a73e8"></div>
<svg style="left:1564.200px;top:357.800px" width="21.600" height="21.400" viewBox="0 0 21.600 21.400"><path d="M3.800 11.800L8.700 16.500L18.700 5.600" fill="none" stroke="#fff" stroke-width="2.700"/></svg>
<div class="t " style="left:1601.5px;top:362px;font-size:16.8px;color:#444746;letter-spacing:-.1px">Show page numbers</div>
<div class="abs" style="left:1552.200px;top:345.500px;width:237.200px;height:49.100px;border:solid #f94336;border-width:5.200px 4.700px 4.600px 4.700px"></div>
<div class="abs" style="left:1579px;top:410px;width:21px;height:21px;border:2.200px solid #4a4e57;border-radius:3px"></div>
<div class="t " style="left:1615.9px;top:414px;font-size:16.8px;color:#444746;letter-spacing:-.1px">Show tab leader</div>
<div class="abs" style="left:1759.400px;top:406.200px;width:119px;height:30.400px;border:1px solid #e8eaed;border-radius:5px"></div>
<svg style="left:1854px;top:419.400px" width="9" height="4.500" viewBox="0 0 10 5" fill="#b4b7bc"><path d="M0 0h10L5 5z"/></svg>
<svg style="left:1562px;top:494px" width="28" height="28" viewBox="0 0 28 28"><path d="M9.500 5.800L18 14L9.500 22.200" fill="none" stroke="#1f1f1f" stroke-width="2.100"/></svg>
<div class="t " style="left:1606.7px;top:500px;font-size:16.8px;color:#1f1f1f;letter-spacing:-.11px;-webkit-text-stroke:.55px #1f1f1f">Heading Levels</div>
<div class="abs" style="left:1890.600px;top:833px;width:48.400px;height:48.400px;border-radius:50%;background:#fff;box-shadow:0 1px 3px rgba(60,64,67,.30),0 2px 6px rgba(60,64,67,.15)"></div>
<svg style="left:1896px;top:845.400px" width="24" height="24" viewBox="0 0 24 24"><path d="M15.300 6.500L9.200 12L15.300 17.500" fill="none" stroke="#3c4043" stroke-width="2.200" transform="translate(0 0)"/></svg>
</body></html>
